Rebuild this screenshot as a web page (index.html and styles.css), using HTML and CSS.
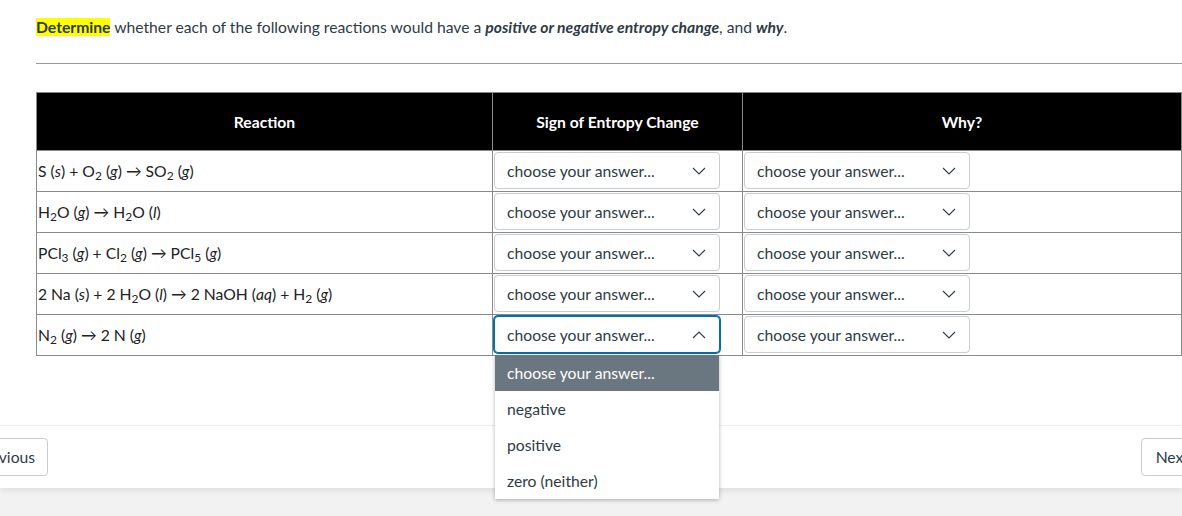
FILE: index.html
```html
<!DOCTYPE html>
<html lang="en">

<head>
    <meta charset="UTF-8" />
    <meta name="viewport" content="width=device-width, initial-scale=1.0" />
    <title>Entropy Change</title>
    <link rel="stylesheet" href="styles.css">
</head>

<body>

    <div class="page">
        <div class="content">
            <p class="prompt"><mark>Determine</mark> whether each of the following reactions would have a <b><i>positive or negative entropy change</i></b>, and <b><i>why</i></b>.</p>
            <hr>

            <table class="answers">
                <thead>
                    <tr>
                        <th class="col-reaction">Reaction</th>
                        <th class="col-sign">Sign of Entropy Change</th>
                        <th>Why?</th>
                    </tr>
                </thead>
                <tbody>
                    <tr>
                        <td class="reaction">S (<i>s</i>) + O<sub>2</sub> (<i>g</i>) → SO<sub>2</sub> (<i>g</i>)</td>
                        <td>
                            <div class="select">choose your answer...
                                <svg class="chevron" viewBox="0 0 14 8"><path d="M1 1 L7 7 L13 1" /></svg>
                            </div>
                        </td>
                        <td>
                            <div class="select">choose your answer...
                                <svg class="chevron" viewBox="0 0 14 8"><path d="M1 1 L7 7 L13 1" /></svg>
                            </div>
                        </td>
                    </tr>
                    <tr>
                        <td class="reaction">H<sub>2</sub>O (<i>g</i>) → H<sub>2</sub>O (<i>l</i>)</td>
                        <td>
                            <div class="select">choose your answer...
                                <svg class="chevron" viewBox="0 0 14 8"><path d="M1 1 L7 7 L13 1" /></svg>
                            </div>
                        </td>
                        <td>
                            <div class="select">choose your answer...
                                <svg class="chevron" viewBox="0 0 14 8"><path d="M1 1 L7 7 L13 1" /></svg>
                            </div>
                        </td>
                    </tr>
                    <tr>
                        <td class="reaction">PCl<sub>3</sub> (<i>g</i>) + Cl<sub>2</sub> (<i>g</i>) → PCl<sub>5</sub> (<i>g</i>)</td>
                        <td>
                            <div class="select">choose your answer...
                                <svg class="chevron" viewBox="0 0 14 8"><path d="M1 1 L7 7 L13 1" /></svg>
                            </div>
                        </td>
                        <td>
                            <div class="select">choose your answer...
                                <svg class="chevron" viewBox="0 0 14 8"><path d="M1 1 L7 7 L13 1" /></svg>
                            </div>
                        </td>
                    </tr>
                    <tr>
                        <td class="reaction">2 Na (<i>s</i>) + 2 H<sub>2</sub>O (<i>l</i>) → 2 NaOH (<i>aq</i>) + H<sub>2</sub> (<i>g</i>)</td>
                        <td>
                            <div class="select">choose your answer...
                                <svg class="chevron" viewBox="0 0 14 8"><path d="M1 1 L7 7 L13 1" /></svg>
                            </div>
                        </td>
                        <td>
                            <div class="select">choose your answer...
                                <svg class="chevron" viewBox="0 0 14 8"><path d="M1 1 L7 7 L13 1" /></svg>
                            </div>
                        </td>
                    </tr>
                    <tr>
                        <td class="reaction">N<sub>2</sub> (<i>g</i>) → 2 N (<i>g</i>)</td>
                        <td>
                            <div class="select open">choose your answer...
                                <svg class="chevron" viewBox="0 0 14 8"><path d="M1 7 L7 1 L13 7" /></svg>
                                <ul class="menu">
                                    <li class="active">choose your answer...</li>
                                    <li>negative</li>
                                    <li>positive</li>
                                    <li>zero (neither)</li>
                                </ul>
                            </div>
                        </td>
                        <td>
                            <div class="select">choose your answer...
                                <svg class="chevron" viewBox="0 0 14 8"><path d="M1 1 L7 7 L13 1" /></svg>
                            </div>
                        </td>
                    </tr>
                </tbody>
            </table>
        </div>

        <div class="footer">
            <button class="btn prev">Previous</button>
            <button class="btn next">Next</button>
        </div>
    </div>

</body>

</html>
```

FILE: styles.css
```css
* {
    margin: 0;
    padding: 0;
    box-sizing: border-box;
}

body {
    font-family: Lato, "Liberation Sans", sans-serif;
    font-size: 15.7px;
    color: #2d3b45;
    background: #f2f2f2;
    min-height: 100vh;
    overflow: hidden;
}

.page {
    position: relative;
    background: #fff;
    box-shadow: 0 3px 6px rgba(0, 0, 0, 0.08);
}

.content {
    padding: 17px 0 0 36px;
}

.prompt {
    line-height: 20px;
}

.prompt mark {
    background: #ffff00;
    color: #2d3b45;
    font-weight: bold;
}

hr {
    border: none;
    border-top: 1px solid #9a9a9a;
    margin: 26px 0 28px;
}

.answers {
    width: 100%;
    border-collapse: collapse;
    border: 1px solid #8a8a8a;
}

.answers th {
    background: #000;
    color: #fff;
    font-weight: bold;
    height: 58px;
    border: 1px solid #8a8a8a;
}

.answers .col-reaction {
    width: 456px;
}

.answers .col-sign {
    width: 250px;
}

.answers td {
    border: 1px solid #8a8a8a;
    height: 41px;
    padding: 1px 1px 2px;
    vertical-align: middle;
}

.answers td.reaction {
    padding: 0 1px;
    color: #222;
}

sub {
    font-size: 12px;
    vertical-align: -3px;
    line-height: 0;
}

.select {
    position: relative;
    display: flex;
    align-items: center;
    justify-content: space-between;
    width: 226px;
    height: 37px;
    padding: 0 13px 0 12px;
    border: 1px solid #c7cdd1;
    border-radius: 4px;
    background: #fff;
    color: #2d3b45;
}

.select.open {
    border-color: #0770a3;
    box-shadow: 0 0 0 1px #0770a3;
}

.chevron {
    width: 14px;
    height: 8px;
    fill: none;
    stroke: #2d3b45;
    stroke-width: 1.1;
}

.menu {
    position: absolute;
    left: 0;
    top: calc(100% + 3px);
    width: 224px;
    list-style: none;
    background: #fff;
    box-shadow: 0 1px 4px rgba(0, 0, 0, 0.3);
    z-index: 5;
}

.menu li {
    height: 36px;
    line-height: 36px;
    padding-left: 12px;
}

.menu li.active {
    background: #6b7780;
    color: #fff;
}

.footer {
    display: flex;
    justify-content: space-between;
    margin-top: 69px;
    padding: 12px 0;
    border-top: 1px solid #ececec;
}

.btn {
    height: 38px;
    padding: 0 14px;
    font-family: inherit;
    font-size: 15.7px;
    color: #2d3b45;
    background: #fff;
    border: 1px solid #c7cdd1;
    border-radius: 4px;
}

.btn.prev {
    margin-left: -37px;
    padding: 0 12px;
}

.btn.next {
    margin-right: -22px;
}
```
